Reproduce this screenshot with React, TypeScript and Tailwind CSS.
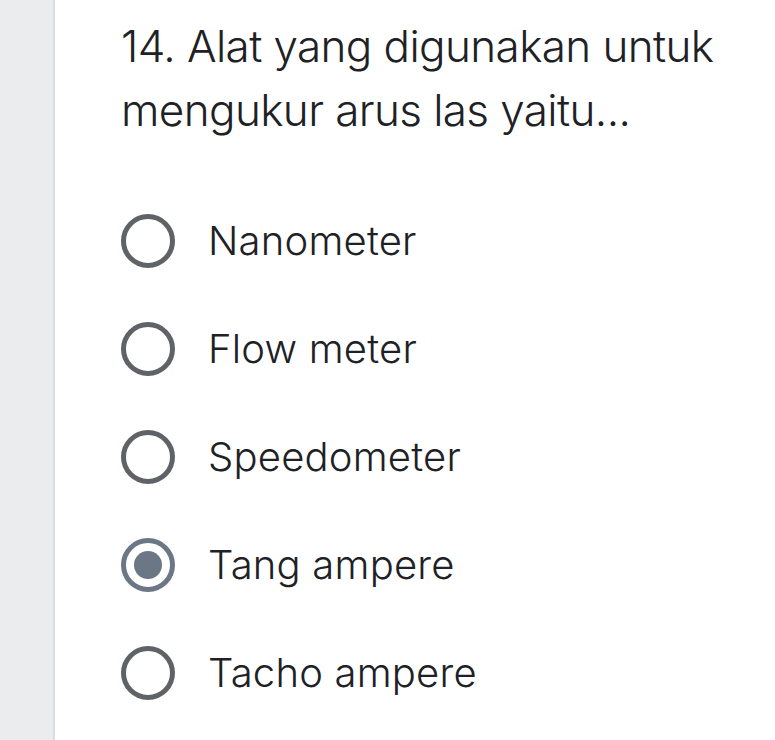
export default function App() {
  const options = ["Nanometer", "Flow meter", "Speedometer", "Tang ampere", "Tacho ampere"];
  const selected = "Tang ampere";

  return (
    <main className="flex h-[740px] w-[775px] overflow-hidden bg-white text-[#202124]" style={{ fontFamily: "Inter, 'Noto Sans', sans-serif" }}>
      <div className="w-[55px] shrink-0 border-r-2 border-[#dadce0] bg-[#ebecee]" />
      <section className="flex-1 pl-[66px] pt-[14px]">
        <h1 className="text-[44px] font-light leading-[64px] tracking-[-0.6px]">
          14. Alat yang digunakan untuk mengukur arus las yaitu...
        </h1>
        <div className="mt-[72px] flex flex-col gap-[54px]">
          {options.map((opt) => {
            const on = opt === selected;
            return (
              <div key={opt} className="flex h-[54px] items-center">
                <div
                  className={
                    "flex h-[54px] w-[54px] shrink-0 items-center justify-center rounded-full border-[5px] " +
                    (on ? "border-[#6b7784]" : "border-[#5f6368]")
                  }
                >
                  {on && <div className="h-[28px] w-[28px] rounded-full bg-[#6b7784]" />}
                </div>
                <span className="ml-[33px] text-[40px] font-light leading-none tracking-[0.2px]">{opt}</span>
              </div>
            );
          })}
        </div>
      </section>
    </main>
  );
}
